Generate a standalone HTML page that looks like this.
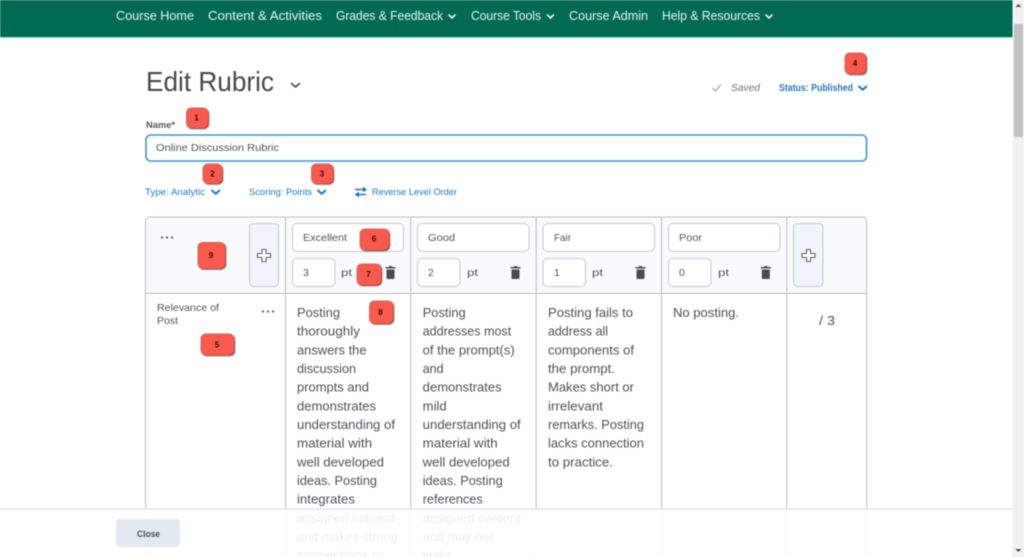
<!DOCTYPE html>
<html lang="en"><head><meta charset="utf-8"><title>Edit Rubric</title>
<style>
html,body{margin:0;padding:0;background:#fff;width:1024px;height:557px;overflow:hidden}
svg{display:block;filter:blur(.4px)}
text{font-family:"Liberation Sans",sans-serif}
.n{font-size:13px;fill:#e8f3ef}
.l{font-size:9.5px;fill:#2878bf}
.d{font-size:13px;fill:#4d5154}
.i{font-size:10.5px;fill:#505457}
.b{fill:#fa5a4d;filter:drop-shadow(1.5px 1.5px .7px rgba(0,0,0,.75))}
.t{font-size:8px;font-weight:bold;fill:#2a0f0d;text-anchor:middle}
.box{fill:#fff;stroke:#c4c8cd;stroke-width:1}
.add{fill:#f1f5fb;stroke:#c4c8cd;stroke-width:1}
.line{stroke:#b9bcc0;stroke-width:1}
.chev{fill:none;stroke-width:2;stroke:#1f78c1;stroke-linecap:round;stroke-linejoin:round}
.nc{fill:none;stroke-width:1.6;stroke:#e8f3ef;stroke-linecap:round;stroke-linejoin:round}
.plus{fill:#fff;stroke:#5d6165;stroke-width:1.1;stroke-linejoin:round}
.trash{fill:#494c4e}
</style></head><body>
<svg xmlns="http://www.w3.org/2000/svg" width="1024" height="557" viewBox="0 0 1024 557">
<rect width="1024" height="557" fill="#fff"/>
<!-- nav -->
<rect width="1012.5" height="37" fill="#006b52"/>
<rect y="37" width="1012.5" height="1" fill="#a8d6c7"/>
<text class="n" x="116" y="20" textLength="78" lengthAdjust="spacingAndGlyphs">Course Home</text>
<text class="n" x="208" y="20" textLength="114" lengthAdjust="spacingAndGlyphs">Content &amp; Activities</text>
<text class="n" x="336" y="20" textLength="107" lengthAdjust="spacingAndGlyphs">Grades &amp; Feedback</text>
<path class="nc" d="M449 15l3 3 3-3"/>
<text class="n" x="471" y="20" textLength="70" lengthAdjust="spacingAndGlyphs">Course Tools</text>
<path class="nc" d="M547.5 15l3 3 3-3"/>
<text class="n" x="569" y="20" textLength="79" lengthAdjust="spacingAndGlyphs">Course Admin</text>
<text class="n" x="662" y="20" textLength="98" lengthAdjust="spacingAndGlyphs">Help &amp; Resources</text>
<path class="nc" d="M766 15l3 3 3-3"/>
<!-- scrollbar -->
<rect x="1012.5" width="11.5" height="557" fill="#f1f1f1"/>
<rect x="1014" y="24" width="9" height="113" fill="#c1c1c1"/>
<path d="M1018.5 4l3 3h-6z" fill="#505050"/>
<path d="M1015.5 549h6l-3 3z" fill="#505050"/>
<!-- heading -->
<text x="146" y="91" font-size="27.5" fill="#46494b" textLength="128" lengthAdjust="spacingAndGlyphs">Edit Rubric</text>
<path d="M291.5 83.5l4 3.500 4-3.500" fill="none" stroke="#494c4e" stroke-width="1.7" stroke-linecap="round" stroke-linejoin="round"/>
<path d="M712.5 88l3 3 5.500-6.500" fill="none" stroke="#b4b8bb" stroke-width="1.6"/>
<text x="731" y="91" font-size="10.5" font-style="italic" fill="#6e7376" textLength="29" lengthAdjust="spacingAndGlyphs">Saved</text>
<text class="l" x="779" y="91" font-weight="bold" style="font-size:10px" textLength="74" lengthAdjust="spacingAndGlyphs">Status: Published</text>
<path class="chev" d="M859 86.5l3.700 3.300 3.700-3.300"/>
<!-- name -->
<text x="146" y="128" font-size="9px" font-weight="bold" fill="#55585b" textLength="29" lengthAdjust="spacingAndGlyphs">Name*</text>
<rect x="146" y="135" width="720.5" height="26" rx="4.5" fill="#fff" stroke="#3f94d8" stroke-width="1.6"/>
<text class="i" x="156" y="151" textLength="123" lengthAdjust="spacingAndGlyphs">Online Discussion Rubric</text>
<text class="l" x="145" y="195" textLength="60" lengthAdjust="spacingAndGlyphs">Type: Analytic</text>
<path class="chev" d="M212 190.5l3.700 3.300 3.700-3.300"/>
<text class="l" x="249" y="195" textLength="63" lengthAdjust="spacingAndGlyphs">Scoring: Points</text>
<path class="chev" d="M318 190.5l3.700 3.300 3.700-3.300"/>
<path d="M355 189.5h9.500M355 194.500h11" fill="none" stroke="#1f78c1" stroke-width="1.6"/>
<path d="M363 186.5l4 3-4 3zM359 191.500v6l-4-3z" fill="#1f78c1"/>
<text class="l" x="372" y="195" textLength="85" lengthAdjust="spacingAndGlyphs">Reverse Level Order</text>
<!-- table -->
<path d="M145.5 293V221a4 4 0 0 1 4-4H862.7a4 4 0 0 1 4 4V293z" fill="#f9fafc"/>
<path d="M145.5 557V221a4 4 0 0 1 4-4H862.7a4 4 0 0 1 4 4V557" fill="none" stroke="#b9bcc0"/>
<path class="line" d="M145.5 293.5H866.7M285.5 217V557M410.7 217V557M536.2 217V557M661.5 217V557M786.8 217V557"/>
<g fill="#55585b"><circle cx="162" cy="237.500" r="1.100"/><circle cx="167" cy="237.500" r="1.100"/><circle cx="172" cy="237.500" r="1.100"/>
<circle cx="263" cy="311.500" r="1.100"/><circle cx="268" cy="311.500" r="1.100"/><circle cx="273" cy="311.500" r="1.100"/></g>
<rect class="add" x="249.5" y="223.5" width="29" height="63" rx="4"/>
<rect class="add" x="793.5" y="223.5" width="29.5" height="63" rx="4"/>
<path class="plus" d="M262 249.5h4v4h4.500v4h-4.500v4h-4v-4h-4.500v-4h4.500z"/>
<path class="plus" d="M806.5 249.5h4v4h4.500v4h-4.500v4h-4v-4h-4.500v-4h4.500z"/>
<!-- level inputs -->
<rect class="box" x="292.5" y="223.5" width="111" height="28" rx="4.5"/>
<rect class="box" x="417.5" y="223.5" width="111.5" height="28" rx="4.5"/>
<rect class="box" x="543" y="223.5" width="111.5" height="28" rx="4.5"/>
<rect class="box" x="668.5" y="223.5" width="111.5" height="28" rx="4.5"/>
<rect class="box" x="292.5" y="258.5" width="42.5" height="28" rx="4.5"/>
<rect class="box" x="417.5" y="258.5" width="42.5" height="28" rx="4.5"/>
<rect class="box" x="543" y="258.5" width="42.5" height="28" rx="4.5"/>
<rect class="box" x="668.5" y="258.5" width="42.5" height="28" rx="4.5"/>
<text class="i" x="303" y="241" textLength="44" lengthAdjust="spacingAndGlyphs">Excellent</text>
<text class="i" x="428" y="241" textLength="27" lengthAdjust="spacingAndGlyphs">Good</text>
<text class="i" x="554" y="241" textLength="17" lengthAdjust="spacingAndGlyphs">Fair</text>
<text class="i" x="679" y="241" textLength="23" lengthAdjust="spacingAndGlyphs">Poor</text>
<text class="i" x="303" y="276">3</text>
<text class="i" x="428" y="276">2</text>
<text class="i" x="554" y="276">1</text>
<text class="i" x="679" y="276">0</text>
<text class="i" x="341" y="276" textLength="11" lengthAdjust="spacingAndGlyphs">pt</text>
<text class="i" x="467" y="276" textLength="11" lengthAdjust="spacingAndGlyphs">pt</text>
<text class="i" x="592" y="276" textLength="11" lengthAdjust="spacingAndGlyphs">pt</text>
<text class="i" x="718" y="276" textLength="11" lengthAdjust="spacingAndGlyphs">pt</text>
<g class="trash">
<path d="M389 266h3v1h3.500v1.500h-10V267h3.500zM386.500 269.500h8V278a1 1 0 0 1-1 1h-6a1 1 0 0 1-1-1z"/>
<path d="M514 266h3v1h3.500v1.500h-10V267h3.500zM511.500 269.500h8V278a1 1 0 0 1-1 1h-6a1 1 0 0 1-1-1z"/>
<path d="M639 266h3v1h3.500v1.500h-10V267h3.500zM636.500 269.500h8V278a1 1 0 0 1-1 1h-6a1 1 0 0 1-1-1z"/>
<path d="M764.3 266h3v1h3.500v1.500h-10V267h3.500zM761.8 269.500h8V278a1 1 0 0 1-1 1h-6a1 1 0 0 1-1-1z"/>
</g>
<!-- row label -->
<text class="i" x="157" y="311" textLength="62" lengthAdjust="spacingAndGlyphs">Relevance of</text>
<text class="i" x="157" y="324" textLength="21" lengthAdjust="spacingAndGlyphs">Post</text>
<!-- col 1 -->
<text class="d" x="297" y="317" textLength="43" lengthAdjust="spacingAndGlyphs">Posting</text>
<text class="d" x="297" y="335.7" textLength="63" lengthAdjust="spacingAndGlyphs">thoroughly</text>
<text class="d" x="297" y="354.3" textLength="69.5" lengthAdjust="spacingAndGlyphs">answers the</text>
<text class="d" x="297" y="373" textLength="59" lengthAdjust="spacingAndGlyphs">discussion</text>
<text class="d" x="297" y="391.7" textLength="72" lengthAdjust="spacingAndGlyphs">prompts and</text>
<text class="d" x="297" y="410.3" textLength="79" lengthAdjust="spacingAndGlyphs">demonstrates</text>
<text class="d" x="297" y="429" textLength="98" lengthAdjust="spacingAndGlyphs">understanding of</text>
<text class="d" x="297" y="447.7" textLength="75" lengthAdjust="spacingAndGlyphs">material with</text>
<text class="d" x="297" y="466.3" textLength="87" lengthAdjust="spacingAndGlyphs">well developed</text>
<text class="d" x="297" y="485" textLength="80" lengthAdjust="spacingAndGlyphs">ideas. Posting</text>
<text class="d" x="297" y="503.7" textLength="58" lengthAdjust="spacingAndGlyphs">integrates</text>
<text class="d" x="297" y="522.3" textLength="98" lengthAdjust="spacingAndGlyphs">assigned content</text>
<text class="d" x="297" y="541" textLength="101" lengthAdjust="spacingAndGlyphs">and makes strong</text>
<text class="d" x="297" y="559.7" textLength="86" lengthAdjust="spacingAndGlyphs">connections to</text>
<!-- col 2 -->
<text class="d" x="422.7" y="317" textLength="43" lengthAdjust="spacingAndGlyphs">Posting</text>
<text class="d" x="422.7" y="335.7" textLength="88.5" lengthAdjust="spacingAndGlyphs">addresses most</text>
<text class="d" x="422.7" y="354.3" textLength="92" lengthAdjust="spacingAndGlyphs">of the prompt(s)</text>
<text class="d" x="422.7" y="373" textLength="21" lengthAdjust="spacingAndGlyphs">and</text>
<text class="d" x="422.7" y="391.7" textLength="79" lengthAdjust="spacingAndGlyphs">demonstrates</text>
<text class="d" x="422.7" y="410.3" textLength="24" lengthAdjust="spacingAndGlyphs">mild</text>
<text class="d" x="422.7" y="429" textLength="98" lengthAdjust="spacingAndGlyphs">understanding of</text>
<text class="d" x="422.7" y="447.7" textLength="75" lengthAdjust="spacingAndGlyphs">material with</text>
<text class="d" x="422.7" y="466.3" textLength="87" lengthAdjust="spacingAndGlyphs">well developed</text>
<text class="d" x="422.7" y="485" textLength="80" lengthAdjust="spacingAndGlyphs">ideas. Posting</text>
<text class="d" x="422.7" y="503.7" textLength="60" lengthAdjust="spacingAndGlyphs">references</text>
<text class="d" x="422.7" y="522.3" textLength="98" lengthAdjust="spacingAndGlyphs">assigned content</text>
<text class="d" x="422.7" y="541" textLength="70" lengthAdjust="spacingAndGlyphs">and may not</text>
<text class="d" x="422.7" y="559.7" textLength="29" lengthAdjust="spacingAndGlyphs">make</text>
<!-- col 3 -->
<text class="d" x="548" y="317" textLength="85" lengthAdjust="spacingAndGlyphs">Posting fails to</text>
<text class="d" x="548" y="335.7" textLength="60" lengthAdjust="spacingAndGlyphs">address all</text>
<text class="d" x="548" y="354.3" textLength="86" lengthAdjust="spacingAndGlyphs">components of</text>
<text class="d" x="548" y="373" textLength="67" lengthAdjust="spacingAndGlyphs">the prompt.</text>
<text class="d" x="548" y="391.7" textLength="86" lengthAdjust="spacingAndGlyphs">Makes short or</text>
<text class="d" x="548" y="410.3" textLength="55" lengthAdjust="spacingAndGlyphs">irrelevant</text>
<text class="d" x="548" y="429" textLength="96" lengthAdjust="spacingAndGlyphs">remarks. Posting</text>
<text class="d" x="548" y="447.7" textLength="96" lengthAdjust="spacingAndGlyphs">lacks connection</text>
<text class="d" x="548" y="466.3" textLength="65" lengthAdjust="spacingAndGlyphs">to practice.</text>
<text class="d" x="673" y="317" textLength="66" lengthAdjust="spacingAndGlyphs">No posting.</text>
<text class="d" x="819" y="325" textLength="16" lengthAdjust="spacingAndGlyphs">/ 3</text>
<!-- footer -->
<rect x="0" y="509" width="1012.5" height="48" fill="#fff" fill-opacity=".89"/>
<rect x="0" y="508" width="1012.5" height="2" fill="#e6e8eb"/>
<rect x="116" y="519" width="64" height="28" rx="4" fill="#e3e9f1"/>
<text x="137" y="537" font-size="9.5" font-weight="bold" fill="#494c4e" textLength="23" lengthAdjust="spacingAndGlyphs">Close</text>
<!-- badges -->
<rect class="b" x="186" y="107.5" width="22" height="20.5" rx="5"/><text class="t" x="196.500" y="120.500">1</text>
<rect class="b" x="202.5" y="163.5" width="19.5" height="20" rx="5"/><text class="t" x="212.500" y="176.500">2</text>
<rect class="b" x="311" y="163.5" width="22" height="20" rx="5"/><text class="t" x="322" y="176.500">3</text>
<rect class="b" x="844.5" y="52.5" width="21.5" height="21.5" rx="5"/><text class="t" x="855" y="66">4</text>
<rect class="b" x="200.5" y="333.5" width="33.5" height="21.5" rx="5"/><text class="t" x="217" y="347.500">5</text>
<rect class="b" x="359.5" y="228.5" width="29.5" height="21.5" rx="5"/><text class="t" x="374" y="241.500">6</text>
<rect class="b" x="356.5" y="263.5" width="24.5" height="21.5" rx="5"/><text class="t" x="368.500" y="277">7</text>
<rect class="b" x="369" y="300.5" width="24" height="23" rx="5"/><text class="t" x="380.500" y="315">8</text>
<rect class="b" x="197.5" y="242" width="27.5" height="26.5" rx="5"/><text class="t" x="211" y="258">9</text>
</svg>
</body></html>
